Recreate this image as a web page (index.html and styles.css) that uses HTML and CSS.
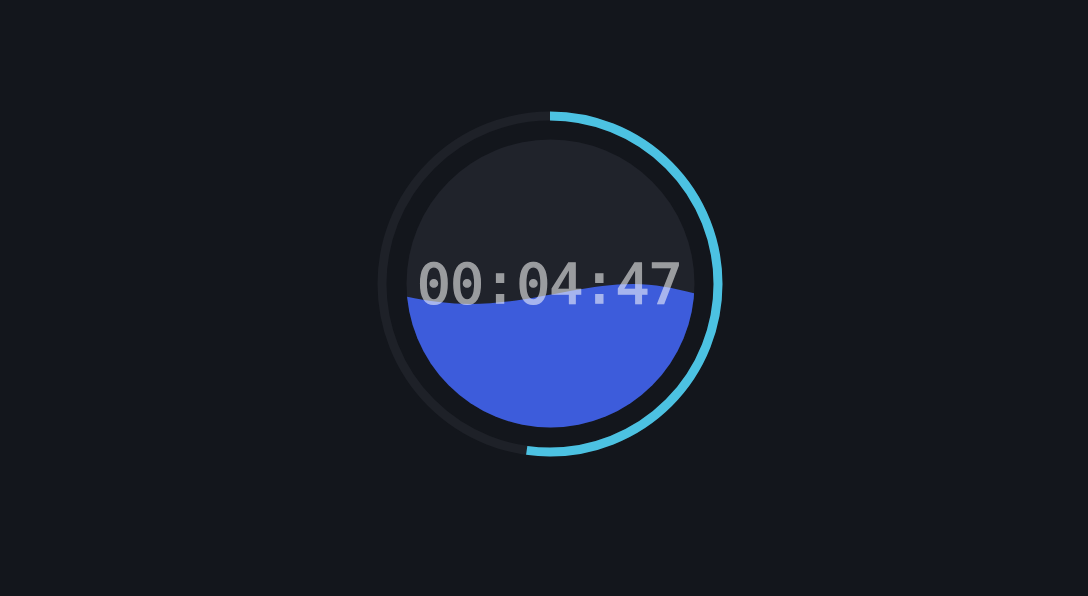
FILE: index.html
```html
<!DOCTYPE html>
<html>
<head>
<meta charset="utf-8">
<link rel="stylesheet" href="styles.css">
</head>
<body>
<main class="stage">
  <div class="timer">
    <svg class="dial" width="360" height="360" viewBox="0 0 360 360">
      <defs>
        <clipPath id="inner">
          <circle cx="180.5" cy="179.5" r="144"/>
        </clipPath>
      </defs>
      <circle class="track" cx="180" cy="180" r="168"/>
      <circle class="progress" cx="180" cy="180" r="168" transform="rotate(-90 180 180)"/>
      <circle class="face" cx="180.5" cy="179.5" r="144"/>
      <path class="water" clip-path="url(#inner)" d="M20 189 C50 196 75 200 100 200 C160 200 210 180 263 180 C290 180 310 186 340 193 L340 360 L20 360 Z"/>
    </svg>
    <div class="time">00:04:47</div>
  </div>
</main>
</body>
</html>
```

FILE: styles.css
```css
html, body {
  margin: 0;
  padding: 0;
  background: #13161c;
}
.stage {
  box-sizing: border-box;
  width: 1088px;
  height: 596px;
  padding: 0 0 29px 11px;
  display: flex;
  align-items: center;
  justify-content: center;
}
.timer {
  display: grid;
  width: 360px;
  height: 360px;
}
.dial, .time {
  grid-area: 1 / 1;
}
.dial {
  display: block;
}
.track {
  fill: none;
  stroke: #1e2128;
  stroke-width: 9;
}
.progress {
  fill: none;
  stroke: #4cc2e2;
  stroke-width: 9;
  stroke-dasharray: 551 1100;
}
.face {
  fill: #20232b;
}
.water {
  fill: #3d5cdb;
}
.time {
  display: flex;
  align-items: center;
  justify-content: center;
  font-family: "DejaVu Sans Mono", monospace;
  font-size: 56px;
  font-weight: 400;
  color: #ffffff;
  -webkit-text-stroke: 1.4px #ffffff;
  opacity: 0.55;
  letter-spacing: -0.6px;
  line-height: 1;
  padding-top: 1px;
}
```
